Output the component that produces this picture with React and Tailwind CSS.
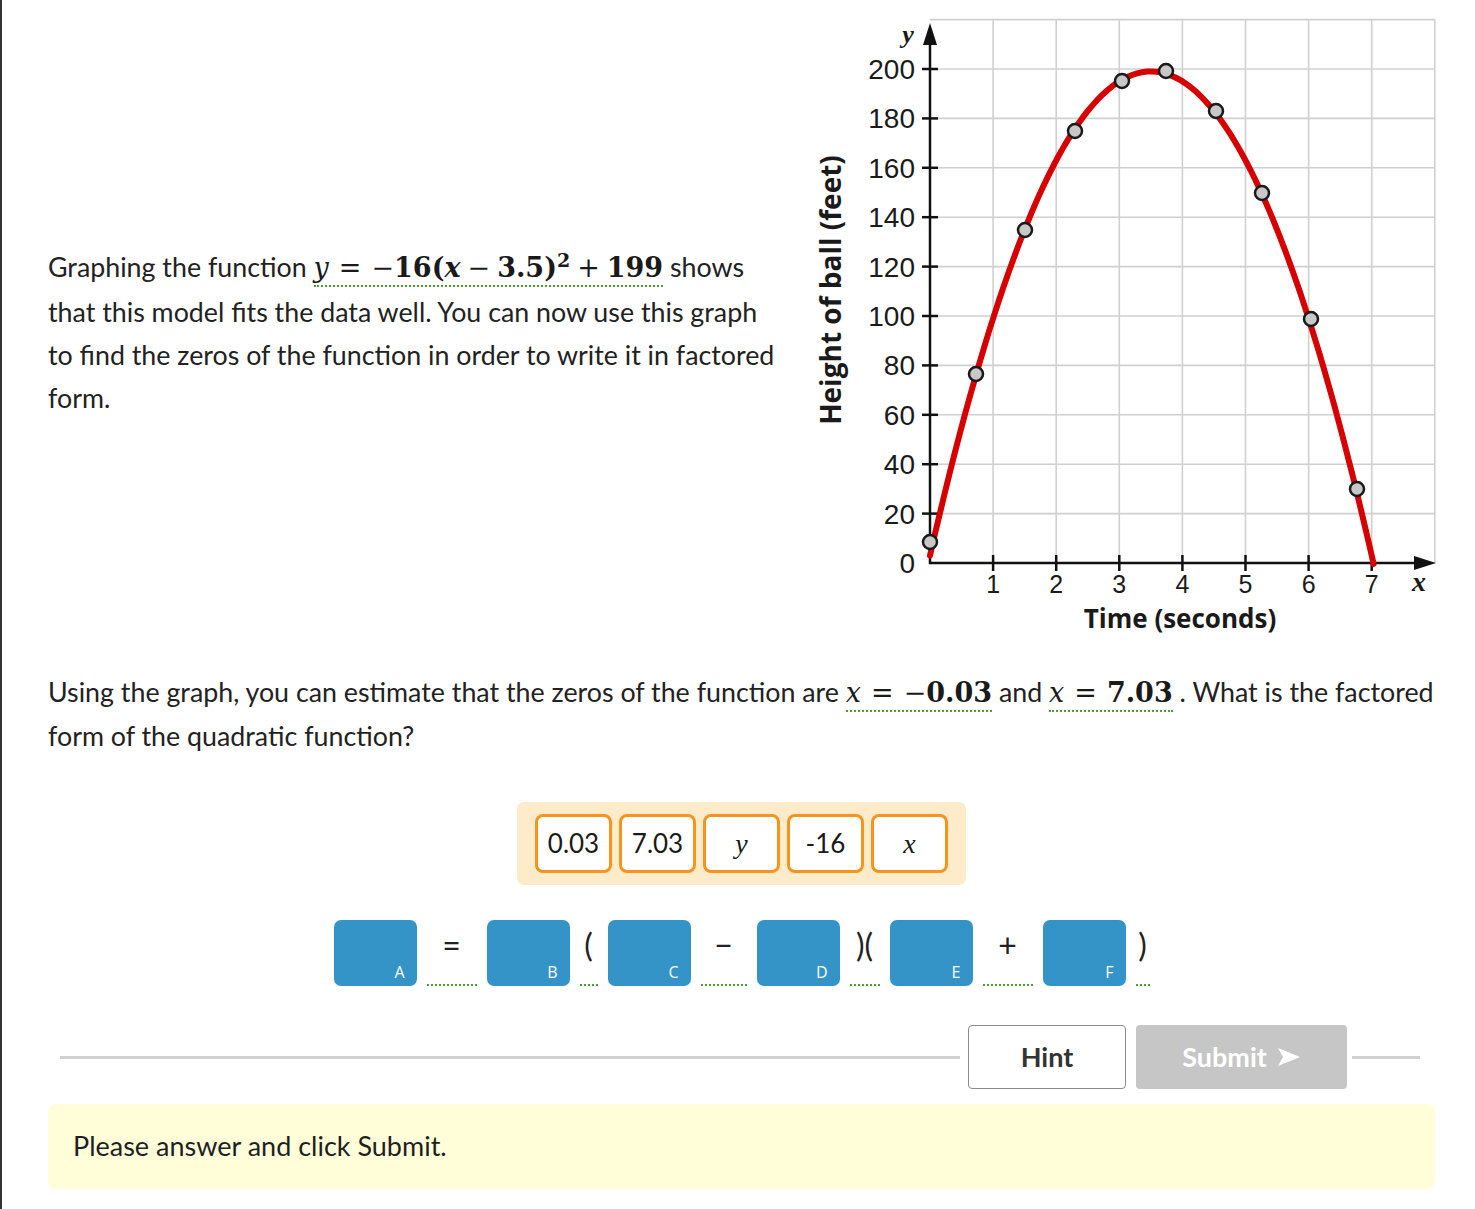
import React from 'react';

// chart scale, in page pixels
const px = (x) => 928 + x * 63.1;
const py = (y) => 563 - y * 2.47;

const dataPoints = [
  [928, 542], [974, 374], [1023, 230], [1073, 131], [1120, 81],
  [1164, 71], [1214, 111], [1260, 193], [1309, 319], [1355, 489],
];

const curvePath = () => {
  const pts = [];
  for (let i = 0; i <= 90; i++) {
    const x = (7.03 * i) / 90;
    const y = -16 * (x - 3.5) ** 2 + 199;
    pts.push(`${px(x).toFixed(1)},${py(y).toFixed(1)}`);
  }
  return 'M' + pts.join(' L');
};

const sans = { fontFamily: '"Liberation Sans", Arial, sans-serif' };

const Chart = () => (
  <svg className="h-[630px] w-[650px] shrink-0" viewBox="810 10 650 630">
    {/* grid */}
    {[1, 2, 3, 4, 5, 6, 7, 8].map((i) => (
      <line key={'v' + i} x1={px(i)} x2={px(i)} y1={py(220)} y2={563} stroke="#d0d0d0" strokeWidth="1.6" />
    ))}
    {[1, 2, 3, 4, 5, 6, 7, 8, 9, 10, 11].map((k) => (
      <line key={'h' + k} x1={928} x2={px(8)} y1={py(k * 20)} y2={py(k * 20)} stroke="#d0d0d0" strokeWidth="1.6" />
    ))}

    {/* axes */}
    <line x1="928" x2="928" y1="564" y2="40" stroke="#111" strokeWidth="2.5" />
    <polygon points="928,23 921,45 935,45" fill="#111" />
    <line x1="927" x2="1418" y1="563" y2="563" stroke="#111" strokeWidth="2.5" />
    <polygon points="1434,563 1412,556 1412,570" fill="#111" />

    {/* ticks + labels */}
    {[0, 1, 2, 3, 4, 5, 6, 7, 8, 9, 10].map((k) => (
      <g key={'yt' + k}>
        {k > 0 && <line x1="920" x2="936" y1={py(k * 20)} y2={py(k * 20)} stroke="#111" strokeWidth="2.5" />}
        <text x="913" y={py(k * 20) + 10} textAnchor="end" fontSize="28" fill="#1a1a1a" style={sans}>
          {k * 20}
        </text>
      </g>
    ))}
    {[1, 2, 3, 4, 5, 6, 7].map((i) => (
      <g key={'xt' + i}>
        <line x1={px(i)} x2={px(i)} y1="555" y2="571" stroke="#111" strokeWidth="2.5" />
        <text x={px(i)} y="593" textAnchor="middle" fontSize="25" fill="#1a1a1a" style={sans}>
          {i}
        </text>
      </g>
    ))}
    <text x="906" y="43" textAnchor="middle" fontSize="26" fontStyle="italic" fontWeight="bold" fill="#1a1a1a" style={{ fontFamily: '"Liberation Serif", serif' }}>
      y
    </text>
    <text x="1417" y="591" textAnchor="middle" fontSize="28" fontStyle="italic" fontWeight="bold" fill="#1a1a1a" style={{ fontFamily: '"Liberation Serif", serif' }}>
      x
    </text>

    {/* axis titles */}
    <text x="832" y="290" transform="rotate(-90 832 290)" textAnchor="middle" dominantBaseline="middle" fontSize="28" fontWeight="bold" fill="#1a1a1a" style={{ fontFamily: '"Open Sans", sans-serif' }}>
      Height of ball (feet)
    </text>
    <text x="1178" y="628" textAnchor="middle" fontSize="26" fontWeight="bold" fill="#1a1a1a" style={{ fontFamily: '"Open Sans", sans-serif' }}>
      Time (seconds)
    </text>

    {/* model + data */}
    <path d={curvePath()} fill="none" stroke="#d60000" strokeWidth="6" strokeLinecap="round" />
    {dataPoints.map(([x, y], i) => (
      <circle key={i} cx={x} cy={y} r="7" fill="#c8c8c8" stroke="#1a1a1a" strokeWidth="2.5" />
    ))}
  </svg>
);

const serif = { fontFamily: '"Liberation Serif", "Times New Roman", serif' };
const mathFont = { fontFamily: '"DejaVu Serif", "Liberation Serif", serif' };

const MathSpan = ({ children }) => (
  <span className="inline-block border-b-2 border-dotted border-[#4a9e2c] pb-[1px] text-[27px] leading-[32px] text-[#1a1a1a]" style={mathFont}>
    {children}
  </span>
);

const Rel = ({ children }) => <span className="mx-[10px]">{children}</span>;
const Bin = ({ children }) => <span className="mx-[7px]">{children}</span>;

const tiles = [
  { t: '0.03' },
  { t: '7.03' },
  { t: 'y', it: true },
  { t: '-16' },
  { t: 'x', it: true },
];

const AnswerBox = ({ label }) => (
  <div className="relative h-[66px] w-[83px] rounded-[7px] bg-[#3494c7]">
    <span className="absolute bottom-[6px] right-[12px] text-[16px] leading-none text-white" style={{ fontFamily: '"Open Sans", sans-serif' }}>
      {label}
    </span>
  </div>
);

const Sym = ({ children, w }) => (
  <div className={'flex h-[64px] justify-center border-b-2 border-dotted border-[#4a9e2c] pt-[6px] text-[32px] leading-[34px] text-[#222] ' + w}>
    {children}
  </div>
);

export default function App() {
  return (
    <div className="min-h-[1209px] w-full border-l-2 border-[#333] bg-white text-[#222]" style={{ fontFamily: 'Lato, "Open Sans", sans-serif' }}>
      <div className="pl-[46px] pr-[40px] pt-[10px]">
        {/* top: text + chart */}
        <div className="flex items-center">
          <div className="w-[764px] shrink-0 pt-[12px] text-[26.8px] leading-[43px]">
            <div className="whitespace-nowrap leading-[48px]">
              Graphing the function{' '}
              <MathSpan>
                <i>y</i>
                <Rel>=</Rel>−<b>16(</b>
                <i className="font-bold">x</i>
                <Bin>−</Bin>
                <b>3.5)</b>
                <sup className="text-[19px] font-bold">2</sup>
                <Bin>+</Bin>
                <b>199</b>
              </MathSpan>{' '}
              shows
            </div>
            <div className="whitespace-nowrap">that this model fits the data well. You can now use this graph</div>
            <div className="whitespace-nowrap">to find the zeros of the function in order to write it in factored</div>
            <div className="whitespace-nowrap">form.</div>
          </div>
          <Chart />
        </div>

        {/* question */}
        <div className="mt-[30px] text-[26.8px] leading-[44px]">
          <div className="whitespace-nowrap">
            Using the graph, you can estimate that the zeros of the function are{' '}
            <MathSpan>
              <i>x</i>
              <Rel>=</Rel>−<b>0.03</b>
            </MathSpan>{' '}
            and{' '}
            <MathSpan>
              <i>x</i>
              <Rel>=</Rel>
              <b>7.03</b>
            </MathSpan>{' '}
            . What is the factored
          </div>
          <div className="whitespace-nowrap">form of the quadratic function?</div>
        </div>

        {/* tiles */}
        <div className="mx-auto mt-[44px] flex w-fit gap-[7px] rounded-[7px] bg-[#fdebca] px-[18px] py-[12px]">
          {tiles.map((tile) => (
            <div
              key={tile.t}
              className="flex h-[59px] w-[77px] items-center justify-center rounded-[8px] border-[3px] border-[#f7941d] bg-white text-[26px] text-[#1a1a1a]"
            >
              {tile.it ? (
                <i className="text-[28px]" style={serif}>
                  {tile.t}
                </i>
              ) : (
                tile.t
              )}
            </div>
          ))}
        </div>

        {/* answer row */}
        <div className="mt-[35px] flex items-end justify-center gap-[10px]">
          <AnswerBox label="A" />
          <Sym w="w-[50px]">=</Sym>
          <AnswerBox label="B" />
          <Sym w="w-[18px]">(</Sym>
          <AnswerBox label="C" />
          <Sym w="w-[46px]">−</Sym>
          <AnswerBox label="D" />
          <Sym w="w-[30px]">)(</Sym>
          <AnswerBox label="E" />
          <Sym w="w-[50px]">+</Sym>
          <AnswerBox label="F" />
          <Sym w="w-[14px]">)</Sym>
        </div>

        {/* buttons */}
        <div className="mt-[39px] flex items-center pl-[12px] pr-[15px]">
          <div className="h-[3px] flex-1 bg-[#d2d2d2]" />
          <button className="ml-[8px] h-[64px] w-[158px] rounded-[4px] border-[1.5px] border-[#8a8a8a] bg-white text-[27px] font-bold text-[#333]">
            Hint
          </button>
          <button className="ml-[10px] flex h-[64px] w-[211px] items-center justify-center gap-[10px] rounded-[4px] bg-[#c6c6c6] text-[27px] font-bold text-white">
            Submit
            <svg width="24" height="20" viewBox="0 0 24 20">
              <polygon points="1,1 23,10 1,19 6,10" fill="#ffffff" />
            </svg>
          </button>
          <div className="ml-[5px] h-[3px] w-[68px] bg-[#d2d2d2]" />
        </div>

        {/* feedback */}
        <div className="mt-[15px] flex h-[85px] items-center rounded-[8px] bg-[#fffed9] pl-[25px] text-[27px] text-[#1f1f1f]">
          Please answer and click Submit.
        </div>
      </div>
    </div>
  );
}
